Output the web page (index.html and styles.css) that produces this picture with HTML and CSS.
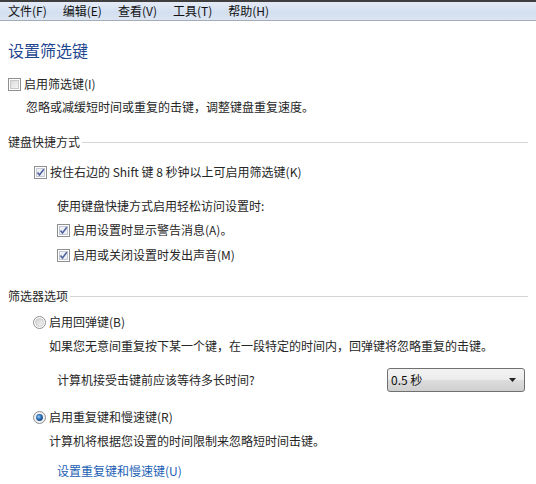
FILE: index.html
```html
<!DOCTYPE html>
<html lang="zh-CN">
<head>
<meta charset="utf-8">
<link rel="stylesheet" href="styles.css">
</head>
<body>
<div class="topline"></div>
<div class="menubar">
  <span class="menu m1">文件(F)</span>
  <span class="menu m2">编辑(E)</span>
  <span class="menu m3">查看(V)</span>
  <span class="menu m4">工具(T)</span>
  <span class="menu m5">帮助(H)</span>
</div>
<div class="content">
  <div class="title">设置筛选键</div>

  <div class="row chk1 ind0">
    <svg class="box" width="13" height="13" viewBox="0 0 13 13"><defs><linearGradient id="g1" x1="0" y1="0" x2="1" y2="1"><stop offset="0" stop-color="#d8d8d8"/><stop offset="1" stop-color="#f8f8f8"/></linearGradient></defs><rect x="0.5" y="0.5" width="12" height="12" fill="#fff" stroke="#8e8f8f"/><rect x="2.5" y="2.5" width="8" height="8" fill="url(#g1)" stroke="#c8c8c8"/></svg>
    <span>启用筛选键(I)</span>
  </div>
  <div class="row desc1 ind1">忽略或减缓短时间或重复的击键，调整键盘重复速度。</div>

  <div class="row sec sec1"><span>键盘快捷方式</span><i class="rule"></i></div>

  <div class="row chk2 ind2">
    <svg class="box" width="13" height="13" viewBox="0 0 13 13"><rect x="0.5" y="0.5" width="12" height="12" fill="#fff" stroke="#8e8f8f"/><rect x="2.5" y="2.5" width="8" height="8" fill="#eef0f5" stroke="#c4c8d2"/><path d="M3.5 6.5 L5.5 9 L9.8 3.2" fill="none" stroke="#4a5f9c" stroke-width="1.5"/></svg>
    <span>按住右边的 Shift 键 8 秒钟以上可启用筛选键(K)</span>
  </div>
  <div class="row txt1 ind3">使用键盘快捷方式启用轻松访问设置时:</div>
  <div class="row chk3 ind3">
    <svg class="box" width="13" height="13" viewBox="0 0 13 13"><rect x="0.5" y="0.5" width="12" height="12" fill="#fff" stroke="#8e8f8f"/><rect x="2.5" y="2.5" width="8" height="8" fill="#eef0f5" stroke="#c4c8d2"/><path d="M3.5 6.5 L5.5 9 L9.8 3.2" fill="none" stroke="#4a5f9c" stroke-width="1.5"/></svg>
    <span>启用设置时显示警告消息(A)。</span>
  </div>
  <div class="row chk4 ind3">
    <svg class="box" width="13" height="13" viewBox="0 0 13 13"><rect x="0.5" y="0.5" width="12" height="12" fill="#fff" stroke="#8e8f8f"/><rect x="2.5" y="2.5" width="8" height="8" fill="#eef0f5" stroke="#c4c8d2"/><path d="M3.5 6.5 L5.5 9 L9.8 3.2" fill="none" stroke="#4a5f9c" stroke-width="1.5"/></svg>
    <span>启用或关闭设置时发出声音(M)</span>
  </div>

  <div class="row sec sec2"><span>筛选器选项</span><i class="rule"></i></div>

  <div class="row rad1 indr">
    <svg class="box" width="13" height="13" viewBox="0 0 13 13"><defs><linearGradient id="g2" x1="0" y1="0" x2="1" y2="1"><stop offset="0" stop-color="#cfcfcf"/><stop offset="1" stop-color="#f6f6f6"/></linearGradient></defs><circle cx="6.5" cy="6.5" r="6" fill="#fff" stroke="#8e8f8f"/><circle cx="6.5" cy="6.5" r="4" fill="url(#g2)" stroke="#c4c4c4" stroke-width="0.8"/></svg>
    <span>启用回弹键(B)</span>
  </div>
  <div class="row desc2 ind4">如果您无意间重复按下某一个键，在一段特定的时间内，回弹键将忽略重复的击键。</div>

  <div class="row qrow ind3">
    <span class="qtext">计算机接受击键前应该等待多长时间?</span>
    <div class="select"><span>0.5 秒</span><svg width="7" height="4" viewBox="0 0 7 4"><path d="M0 0 H7 L3.5 4 Z" fill="#222"/></svg></div>
  </div>

  <div class="row rad2 indr">
    <svg class="box" width="13" height="13" viewBox="0 0 13 13"><defs><radialGradient id="g3" cx="0.4" cy="0.4" r="0.7"><stop offset="0" stop-color="#9fd0f5"/><stop offset="0.5" stop-color="#2a6fb8"/><stop offset="1" stop-color="#13396e"/></radialGradient></defs><circle cx="6.5" cy="6.5" r="6" fill="#eef0f4" stroke="#8e8f8f"/><circle cx="6.5" cy="6.5" r="3.4" fill="url(#g3)"/></svg>
    <span>启用重复键和慢速键(R)</span>
  </div>
  <div class="row desc3 ind4">计算机将根据您设置的时间限制来忽略短时间击键。</div>

  <div class="row link ind3"><a href="#">设置重复键和慢速键(U)</a></div>
</div>
</body>
</html>
```

FILE: styles.css
```css
html, body {
  margin: 0;
  padding: 0;
  background: #ffffff;
}
body {
  width: 536px;
  height: 484px;
  overflow: hidden;
  font-family: "Noto Sans CJK SC", "Noto Sans", "Liberation Sans", sans-serif;
  font-size: 12px;
  color: #262626;
}
.topline {
  height: 2px;
  background: #3f3f3f;
}
.menubar {
  height: 18px;
  border-bottom: 1px solid #a6acb6;
  background: linear-gradient(#e4ebf6, #d3dff0 60%, #dce5f2);
  display: flex;
  align-items: center;
}
.menu {
  line-height: 18px;
  color: #111;
  white-space: nowrap;
}
.m1 { margin-left: 8px; }
.m2 { margin-left: 16px; }
.m3 { margin-left: 16px; }
.m4 { margin-left: 16px; }
.m5 { margin-left: 16px; }

.content {
  display: flex;
  flex-direction: column;
}
.title {
  margin-top: 18px;
  margin-left: 8px;
  height: 22px;
  line-height: 22px;
  font-size: 16px;
  color: #1f4790;
}
.row {
  height: 20px;
  line-height: 20px;
  display: flex;
  align-items: center;
  white-space: nowrap;
}
.box {
  flex: none;
  margin-right: 3px;
}
.ind0 { margin-left: 8px; }
.ind1 { margin-left: 26px; }
.ind2 { margin-left: 34px; }
.ind3 { margin-left: 57px; }
.indr { margin-left: 33px; }
.ind4 { margin-left: 49px; }

.chk1 { margin-top: 13px; }
.desc1 { margin-top: 3px; }
.sec1 { margin-top: 15px; }
.chk2 { margin-top: 10px; }
.txt1 { margin-top: 14px; }
.chk3 { margin-top: 4px; }
.chk4 { margin-top: 5px; }
.sec2 { margin-top: 21px; }
.rad1 { margin-top: 6px; }
.desc2 { margin-top: 4px; }
.qrow { margin-top: 12px; height: 24px; }
.rad2 { margin-top: 15px; }
.desc3 { margin-top: 4px; }
.link { margin-top: 10px; }

.sec {
  margin-left: 8px;
  margin-right: 8px;
}
.sec .rule {
  flex: 1;
  height: 1px;
  background: #d5d5d5;
  margin-left: 2px;
  margin-top: 1px;
}
.qtext {
  flex: none;
}
.select {
  margin-left: auto;
  margin-right: 11px;
  box-sizing: border-box;
  width: 138px;
  height: 24px;
  border: 1px solid #707070;
  border-radius: 3px;
  background: linear-gradient(#f3f3f3, #ebebeb 50%, #dddddd 51%, #cfcfcf);
  display: flex;
  align-items: center;
  justify-content: space-between;
  padding: 0 8px 0 3px;
  color: #111;
}
.link a {
  color: #1c5fb4;
  text-decoration: none;
}
```
